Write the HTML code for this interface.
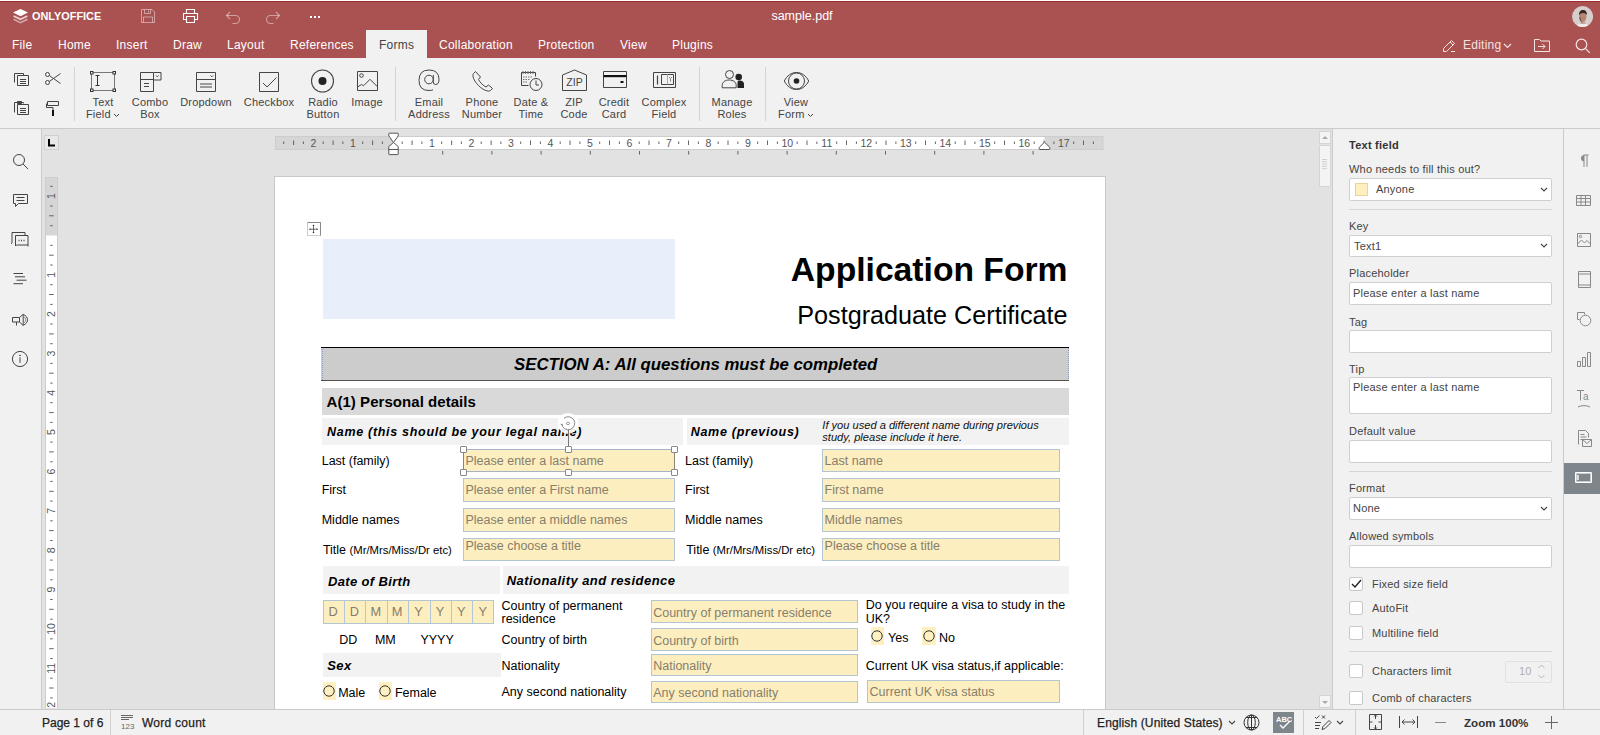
<!DOCTYPE html>
<html><head><meta charset="utf-8">
<style>
*{box-sizing:border-box;margin:0;padding:0}
html,body{width:1600px;height:735px;overflow:hidden;font-family:"Liberation Sans",sans-serif;background:#e2e2e2;color:#444}
.a{position:absolute}
#hdr{left:0;top:0;width:1600px;height:58px;background:#aa5252;border-top:2px solid #a02828}
.tab{position:absolute;top:36px;font-size:12px;color:#fff;line-height:14px;letter-spacing:.25px}
#tb{left:0;top:58px;width:1600px;height:71px;background:#f1f1f1;border-bottom:1px solid #cbcbcb}
.tl{position:absolute;top:37.6px;font-size:11px;color:#444;line-height:12px;letter-spacing:.2px;text-align:center;white-space:nowrap}
.sep{position:absolute;top:9px;width:1px;height:54px;background:#d4d4d4}
#lp{left:0;top:129px;width:42px;height:580px;background:#f1f1f1;border-right:1px solid #cbcbcb}
#rp{left:1332px;top:129px;width:232px;height:580px;background:#f1f1f1;border-left:1px solid #cbcbcb}
#ri{left:1563px;top:129px;width:37px;height:580px;background:#f1f1f1;border-left:1px solid #cbcbcb}
#sb{left:0;top:709px;width:1600px;height:26px;background:#f1f1f1;border-top:1px solid #cbcbcb}
#page{left:274px;top:176px;width:831.5px;height:560px;background:#fff;border:1px solid #c6c8cc}
.d{position:absolute;font-family:"Liberation Sans",sans-serif;color:#000;white-space:nowrap}
.rl{position:absolute;left:1349px;font-size:11px;line-height:13px;color:#444;white-space:nowrap;letter-spacing:.2px}
.inp{position:absolute;left:1349px;width:203px;background:#fff;border:1px solid #cfcfcf;border-radius:2px}
.chev{position:absolute;left:1540px}
.hsep{position:absolute;left:1349px;width:203px;height:1px;background:#d5d5d5}
.cb{position:absolute;left:1349px;width:14px;height:14px;background:#fff;border:1px solid #c8c8c8;border-radius:2px}
.st{position:absolute;top:716px;font-size:12px;line-height:14px;color:#222;white-space:nowrap;-webkit-text-stroke:.25px #222}
</style></head><body>
<div id="hdr" class="a">
 <!-- logo -->
 <svg class="a" style="left:12px;top:6.0px" width="17" height="17" viewBox="0 0 17 17">
  <path d="M8.5 1 L16 4.6 L8.5 8.2 L1 4.6Z" fill="#fff"/>
  <path d="M1.6 8 L8.5 11.3 L15.4 8" fill="none" stroke="#fff" stroke-opacity=".75" stroke-width="1.6"/>
  <path d="M1.6 11.3 L8.5 14.6 L15.4 11.3" fill="none" stroke="#fff" stroke-opacity=".5" stroke-width="1.6"/>
 </svg>
 <div class="a" style="left:32px;top:8.0px;font-size:10.9px;font-weight:bold;color:#fff">ONLYOFFICE</div>
 <!-- save -->
 <svg class="a" style="left:140px;top:6.0px" width="16" height="16" viewBox="0 0 16 16" fill="none" stroke="#fff" stroke-opacity=".45" stroke-width="1">
  <path d="M1.5 1.5h10.5l2.5 2.5v10.5h-13z"/><path d="M4.5 1.5v4h6v-4"/><path d="M3.5 14.5v-5.5h9v5.5"/><path d="M8.5 2.5v2"/>
 </svg>
 <!-- print -->
 <svg class="a" style="left:182px;top:6.0px" width="17" height="16" viewBox="0 0 17 16" fill="none" stroke="#fff" stroke-width="1.1">
  <path d="M4.5 5.5v-4h8v4"/><path d="M4.5 11.5h-3v-6h14v6h-3"/><path d="M4.5 8.5h8v6h-8z"/>
 </svg>
 <!-- undo -->
 <svg class="a" style="left:225px;top:8.0px" width="16" height="15" viewBox="0 0 16 15" fill="none" stroke="#fff" stroke-opacity=".45" stroke-width="1.1">
  <path d="M1.5 5.5h9a4 4 0 0 1 0 8h-3"/><path d="M5 2l-3.5 3.5L5 9"/>
 </svg>
 <!-- redo -->
 <svg class="a" style="left:265px;top:8.0px" width="16" height="15" viewBox="0 0 16 15" fill="none" stroke="#fff" stroke-opacity=".45" stroke-width="1.1">
  <path d="M14.5 5.5h-9a4 4 0 0 0 0 8h3"/><path d="M11 2l3.5 3.5L11 9"/>
 </svg>
 <svg class="a" style="left:309px;top:13.0px" width="12" height="4" viewBox="0 0 12 4" fill="#fff">
  <rect x="1" y="1" width="2" height="2"/><rect x="5" y="1" width="2" height="2"/><rect x="9" y="1" width="2" height="2"/>
 </svg>
 <div class="a" style="left:0;width:1604px;top:7.0px;text-align:center;font-size:12.5px;color:#fff">sample.pdf</div>
 <!-- avatar -->
 <svg class="a" style="left:1572px;top:3.8px" width="21.2" height="21.2" viewBox="0 0 21.2 21.2">
  <defs><clipPath id="av"><circle cx="10.6" cy="10.6" r="10.5"/></clipPath></defs>
  <circle cx="10.6" cy="10.6" r="10.5" fill="#d6cdcd"/>
  <g clip-path="url(#av)">
   <path d="M4 22c1-4 3-5 6.5-5s5.5 1 6.5 5z" fill="#efe9e8"/>
   <path d="M8 18l1.5-3h3l1.5 3z" fill="#c9a597"/>
   <ellipse cx="10.8" cy="10.8" rx="3.6" ry="5" fill="#b58574"/>
   <path d="M7 9.5c-.3-3.5 1.5-5.5 4-5.5s4.3 1.5 3.8 5.5c-.5-1.8-1.5-2.6-3.8-2.6S7.5 7.7 7 9.5z" fill="#3b2520"/>
   <path d="M7.5 11c0 3 1.2 5.5 3.3 5.5-1.5-.8-2.2-2.5-2.3-5z" fill="#5a3a30"/>
  </g>
 </svg>
 <!-- tabs -->
 <div class="tab" style="left:12px">File</div>
 <div class="tab" style="left:58px">Home</div>
 <div class="tab" style="left:116px">Insert</div>
 <div class="tab" style="left:173px">Draw</div>
 <div class="tab" style="left:227px">Layout</div>
 <div class="tab" style="left:290px">References</div>
 <div class="a" style="left:366px;top:28.0px;width:61px;height:29px;background:#f1f1f1"></div>
 <div class="tab" style="left:379px;color:#444">Forms</div>
 <div class="tab" style="left:439px">Collaboration</div>
 <div class="tab" style="left:538px">Protection</div>
 <div class="tab" style="left:620px">View</div>
 <div class="tab" style="left:672px">Plugins</div>
 <!-- right -->
 <svg class="a" style="left:1442px;top:36.0px" width="15" height="15" viewBox="0 0 15 15" fill="none" stroke="#f5e3e3" stroke-width="1">
  <path d="M1.5 13.5v-3l8-8 3 3-8 8z"/><path d="M8 4l3 3"/><path d="M9 13.5h4"/>
 </svg>
 <div class="tab" style="left:1463px;color:#f5e3e3">Editing</div>
 <svg class="a" style="left:1503px;top:41.0px" width="9" height="6" viewBox="0 0 9 6" fill="none" stroke="#f5e3e3" stroke-width="1.2"><path d="M1 1l3.5 3.5L8 1"/></svg>
 <svg class="a" style="left:1533px;top:36.0px" width="18" height="15" viewBox="0 0 18 15" fill="none" stroke="#f5e3e3" stroke-width="1">
  <path d="M1.5 13.5v-12h5l1.5 1.5h8.5v10.5z"/><path d="M5 8.5h7"/><path d="M9.5 6l2.5 2.5-2.5 2.5"/>
 </svg>
 <svg class="a" style="left:1575px;top:36.0px" width="16" height="16" viewBox="0 0 16 16" fill="none" stroke="#f5e3e3" stroke-width="1.2">
  <circle cx="6.5" cy="6.5" r="5.3"/><path d="M10.3 10.3l4.5 4.5"/>
 </svg>
</div>
<div class="a" style="left:0;top:0;width:1600px;height:1px;background:#fff"></div>

<div id="tb" class="a">
 <!-- copy -->
 <svg class="a" style="left:13px;top:14px" width="17" height="15" viewBox="0 0 17 15" fill="none" stroke="#444" stroke-width="1">
  <path d="M1.5 10.5v-9h9v2"/><path d="M4.5 13.5v-10h11v10z"/><path d="M7 7.5h6M7 9.5h6M7 11.5h6"/>
 </svg>
 <!-- cut -->
 <svg class="a" style="left:44px;top:13px" width="18" height="15" viewBox="0 0 18 15" fill="none" stroke="#444" stroke-width="1">
  <circle cx="3.5" cy="3.5" r="2"/><circle cx="3.5" cy="11.5" r="2"/><path d="M5.3 4.5L16.5 12.5M5.3 10.5L16.5 2.5"/>
 </svg>
 <!-- paste -->
 <svg class="a" style="left:13px;top:42px" width="17" height="15" viewBox="0 0 17 15" fill="none" stroke="#444" stroke-width="1">
  <path d="M1.5 12.5v-10h3M9 2.5h1.5v1"/><path d="M4.5 1.5h4v2h-4z" fill="#444"/><path d="M4.5 14.5v-10h11v10z"/><path d="M7 8.5h6M7 10.5h6M7 12.5h6"/>
 </svg>
 <!-- format painter -->
 <svg class="a" style="left:45px;top:42px" width="15" height="16" viewBox="0 0 15 16" fill="none" stroke="#444" stroke-width="1">
  <path d="M2.5 1.5h11v4h-11z"/><path d="M1.5 3.5v4h6.5v3"/><rect x="7" y="10" width="2" height="6" fill="#111" stroke="none"/>
 </svg>
 <div class="sep" style="left:74px"></div>
 <!-- text field -->
 <svg class="a" style="left:89px;top:12px" width="28" height="23" viewBox="0 0 28 23" fill="none" stroke="#555" stroke-width="1">
  <path d="M3 2.5h22M3 20.5h22M2.5 3v17M25.5 3v17" stroke="#777"/>
  <rect x="1.5" y="1.5" width="2.5" height="2.5" fill="#f1f1f1" stroke="#333"/><rect x="24" y="1.5" width="2.5" height="2.5" fill="#f1f1f1" stroke="#333"/><rect x="1.5" y="19" width="2.5" height="2.5" fill="#f1f1f1" stroke="#333"/><rect x="24" y="19" width="2.5" height="2.5" fill="#f1f1f1" stroke="#333"/>
  <path d="M8.5 5.5v10M6.5 5.5h4M6.5 15.5h4" stroke="#333"/>
 </svg>
 <div class="tl" style="left:83px;width:40px">Text<br>Field&thinsp;<svg width="7" height="5" viewBox="0 0 7 5" fill="none" stroke="#444"><path d="M1 1l2.5 2.5L6 1"/></svg></div>
 <!-- combo box -->
 <svg class="a" style="left:139px;top:13px" width="24" height="22" viewBox="0 0 24 22" fill="none" stroke="#444" stroke-width="1">
  <path d="M1.5 1.5h13v19h-13z"/><path d="M14.5 1.5h7.5v7.5h-7.5"/><path d="M1.5 8.5h13"/><path d="M5 12.5h5M5 15.5h5"/><path d="M17 4.5l1.3 1.3 1.3-1.3"/>
 </svg>
 <div class="tl" style="left:125px;width:50px">Combo<br>Box</div>
 <!-- dropdown -->
 <svg class="a" style="left:195px;top:13px" width="22" height="22" viewBox="0 0 22 22" fill="none" stroke="#444" stroke-width="1">
  <path d="M1.5 1.5h19v19h-19z"/><path d="M1.5 8.5h19"/><path d="M15.5 4.5l1.3 1.3 1.3-1.3"/><path d="M5 13h12M5 16h12"/>
 </svg>
 <div class="tl" style="left:176px;width:60px">Dropdown</div>
 <!-- checkbox -->
 <svg class="a" style="left:258px;top:13px" width="22" height="22" viewBox="0 0 22 22" fill="none" stroke="#444" stroke-width="1">
  <path d="M1.5 1.5h19v19h-19z"/><path d="M5 12l4 4 9.5-9.5"/>
 </svg>
 <div class="tl" style="left:239px;width:60px">Checkbox</div>
 <!-- radio -->
 <svg class="a" style="left:310px;top:11px" width="25" height="24" viewBox="0 0 25 24" fill="none" stroke="#444" stroke-width="1.1">
  <circle cx="12.5" cy="12" r="11"/><circle cx="12.5" cy="12" r="4" fill="#222" stroke="none"/>
 </svg>
 <div class="tl" style="left:298px;width:50px">Radio<br>Button</div>
 <!-- image -->
 <svg class="a" style="left:356px;top:12px" width="23" height="22" viewBox="0 0 23 22" fill="none" stroke="#444" stroke-width="1">
  <path d="M1.5 1.5h20v19h-20z"/><circle cx="5.5" cy="5.5" r="1.8"/><path d="M1.5 17l4-2.5 2 1.3 6.5-6.5 7.5 7.5"/>
 </svg>
 <div class="tl" style="left:342px;width:50px">Image</div>
 <div class="sep" style="left:395px"></div>
 <!-- email -->
 <svg class="a" style="left:418px;top:11px" width="23" height="23" viewBox="0 0 23 23" fill="none" stroke="#444" stroke-width="1">
  <circle cx="11" cy="10.5" r="4.3"/><path d="M15.3 6v7q0 2.5 2.3 2.5 3.4 0 3.4-5 0-9.5-10-9.5-10 0-10 10.5 0 10 10 10 2.5 0 4-.7"/>
 </svg>
 <div class="tl" style="left:404px;width:50px">Email<br>Address</div>
 <!-- phone -->
 <svg class="a" style="left:471px;top:12px" width="23" height="22" viewBox="0 0 23 22" fill="none" stroke="#444" stroke-width="1">
  <path d="M4.5 1.5l-2 2c-1.5 2 0 7 5 12s10 6.5 12 5l2-2-4-3.5-2.5 2c-3-1.5-6-4.5-7.5-7.5l2-2.5z"/>
 </svg>
 <div class="tl" style="left:457px;width:50px">Phone<br>Number</div>
 <!-- date time -->
 <svg class="a" style="left:520px;top:12px" width="24" height="23" viewBox="0 0 24 23" fill="none" stroke="#444" stroke-width="1">
  <path d="M1.5 2.5h14v4M1.5 2.5v13h7"/><path d="M3 1v3M5.5 1v3M8 1v3M10.5 1v3M13 1v3" stroke="#666"/><path d="M3 7h1.5M5.5 7h1.5M8 7h1.5M10.5 7h1.5M3 9.5h1.5M5.5 9.5h1.5M8 9.5h1.5M3 12h1.5M5.5 12h1.5" stroke="#777"/>
  <circle cx="16" cy="14.5" r="6" /><path d="M16 10.5v4.5h3"/>
 </svg>
 <div class="tl" style="left:506px;width:50px">Date &amp;<br>Time</div>
 <!-- zip -->
 <svg class="a" style="left:561px;top:11px" width="27" height="24" viewBox="0 0 27 24" fill="none" stroke="#444" stroke-width="1">
  <path d="M1.5 6l12-5 12 5v15.5h-24z"/>
  <text x="13.5" y="16.5" text-anchor="middle" font-family="Liberation Sans" font-size="10.5" fill="#444" stroke="none">ZIP</text>
 </svg>
 <div class="tl" style="left:549px;width:50px">ZIP<br>Code</div>
 <!-- credit card -->
 <svg class="a" style="left:602px;top:13px" width="26" height="19" viewBox="0 0 26 19" fill="none" stroke="#444" stroke-width="1">
  <path d="M1.5 0.5h23v16h-23z"/><rect x="1.5" y="4" width="23" height="2.2" fill="#111" stroke="none"/><rect x="18.5" y="10" width="3" height="2" fill="#111" stroke="none"/>
 </svg>
 <div class="tl" style="left:589px;width:50px">Credit<br>Card</div>
 <!-- complex field -->
 <svg class="a" style="left:652px;top:13px" width="25" height="18" viewBox="0 0 25 18" fill="none" stroke="#444" stroke-width="1">
  <path d="M1.5 1.5h22v15h-22z"/><path d="M5.5 4.5v9" stroke-width="1.2"/><path d="M9.5 3.5h12v10h-12z"/><path d="M15.5 3.5v10" stroke="#aaa"/><path d="M17 6l1.5 1.5 1.5-1.5M18.5 7.5v3" stroke="#888"/>
 </svg>
 <div class="tl" style="left:639px;width:50px">Complex<br>Field</div>
 <div class="sep" style="left:699px"></div>
 <!-- manage roles -->
 <svg class="a" style="left:721px;top:12px" width="25" height="20" viewBox="0 0 25 20" fill="none" stroke="#444" stroke-width="1">
  <circle cx="8.5" cy="4.5" r="4"/><path d="M1.2 17.8v-2.3c0-3.5 3-5.5 7-5.5s7 2 7 5.5v2.3z"/>
  <circle cx="17.7" cy="7" r="3.3" fill="#222" stroke="none"/><path d="M16.5 18v-5.5c0-1.5 1-2 2-2 2 0 4.5 1 4.5 3.5v4z" fill="#222" stroke="none"/>
 </svg>
 <div class="tl" style="left:707px;width:50px">Manage<br>Roles</div>
 <div class="sep" style="left:765px"></div>
 <!-- view form -->
 <svg class="a" style="left:783px;top:13px" width="27" height="20" viewBox="0 0 27 20" fill="none" stroke="#444" stroke-width="1">
  <path d="M1.3 10C4 4.5 8.5 1.5 13.5 1.5S23 4.5 25.7 10C23 15.5 18.5 18.5 13.5 18.5S4 15.5 1.3 10z"/>
  <circle cx="13.5" cy="10" r="8"/><circle cx="13.5" cy="10" r="2.8" fill="#222" stroke="none"/>
 </svg>
 <div class="tl" style="left:771px;width:50px">View<br>Form&thinsp;<svg width="7" height="5" viewBox="0 0 7 5" fill="none" stroke="#444"><path d="M1 1l2.5 2.5L6 1"/></svg></div>
</div>

<div id="lp" class="a">
 <svg class="a" style="left:12px;top:24px" width="17" height="17" viewBox="0 0 17 17" fill="none" stroke="#444" stroke-width="1">
  <circle cx="7" cy="7" r="5.5"/><path d="M11 11l5 5"/>
 </svg>
 <svg class="a" style="left:12px;top:64px" width="17" height="15" viewBox="0 0 17 15" fill="none" stroke="#444" stroke-width="1">
  <path d="M1.5 1.5h14v9h-9l-3 3v-3h-2z"/><path d="M4.5 4.5h8M4.5 7.5h8"/>
 </svg>
 <svg class="a" style="left:10px;top:102px" width="20" height="18" viewBox="0 0 20 18" fill="none" stroke="#444" stroke-width="1">
  <path d="M2 12v-10.5h13v3"/><path d="M2 12l-.8 .8"/><path d="M5.5 4.5h12.5v9.5h-11.5l-1 1z"/><path d="M18 14v1.5" /><path d="M8.5 9.5h1M11 9.5h1M13.5 9.5h1" stroke-width="1.3"/>
 </svg>
 <svg class="a" style="left:12px;top:143px" width="16" height="14" viewBox="0 0 16 14" fill="none" stroke="#444" stroke-width="1">
  <path d="M1.5 1.5h9.5M3 4.8h10M4.5 8.2h10" /><path d="M1.5 11.7h9.5"/>
 </svg>
 <svg class="a" style="left:11px;top:182px" width="19" height="17" viewBox="0 0 19 17" fill="none" stroke="#444" stroke-width="1">
  <path d="M1.5 6.5h7v4.5h-7z"/><path d="M8.5 6.5l3.7-3.3v11.3l-3.7-3.5"/><path d="M5.5 11v3.5"/><path d="M12.5 3.5c2.5 1 4 3 4 5.3s-1.5 4.3-4 5.3" /><path d="M12.8 5.5c1.2.8 1.8 2 1.8 3.3s-.6 2.5-1.8 3.3" stroke="#888"/>
 </svg>
 <svg class="a" style="left:11px;top:221px" width="18" height="18" viewBox="0 0 18 18" fill="none" stroke="#444" stroke-width="1">
  <circle cx="9" cy="9" r="7.6"/><path d="M9 7.3v5.5"/><circle cx="9" cy="5.5" r=".4" fill="#444"/>
 </svg>
</div>
<!-- corner box -->
<div class="a" style="left:44px;top:135px;width:15px;height:15px;background:#e8e8e8;border:1px solid #d0d0d0"></div>
<svg class="a" style="left:48px;top:139px" width="8" height="8" viewBox="0 0 8 8"><path d="M1 0v6.5h6" fill="none" stroke="#000" stroke-width="2"/></svg>
<!-- scrollbar -->
<div class="a" style="left:1318.5px;top:130.5px;width:12px;height:13px;border:1px solid #d4d4d4;background:#f4f4f4"></div>
<svg class="a" style="left:1320.5px;top:134.5px" width="8" height="5" viewBox="0 0 8 5"><path d="M1 4l3-3 3 3z" fill="#aaa"/></svg>
<div class="a" style="left:1318.5px;top:145px;width:12px;height:42px;border:1px solid #d4d4d4;background:#f4f4f4;border-radius:1px"></div>
<svg class="a" style="left:1321.5px;top:158px" width="6" height="12" viewBox="0 0 6 12"><path d="M0 1.5h5M0 3.8h5M0 6.1h5M0 8.4h5M0 10.7h5" stroke="#cfcfcf"/></svg>
<div class="a" style="left:1318.5px;top:695px;width:12px;height:13px;border:1px solid #d4d4d4;background:#f4f4f4"></div>
<svg class="a" style="left:1320.5px;top:699.5px" width="8" height="5" viewBox="0 0 8 5"><path d="M1 1l3 3 3-3z" fill="#aaa"/></svg>

<svg class="a" style="left:275px;top:130px" width="829" height="26" viewBox="0 0 829 26">
<rect x="0.5" y="6.5" width="827.5" height="13" fill="#d6d6d6" stroke="#cdcdcd"/>
<rect x="118.5" y="7" width="651.0" height="12" fill="#fff"/>
<line x1="8.7" y1="11.5" x2="8.7" y2="14" stroke="#555" stroke-width="0.9"/>
<line x1="18.6" y1="10.5" x2="18.6" y2="15" stroke="#555" stroke-width="0.9"/>
<line x1="28.4" y1="11.5" x2="28.4" y2="14" stroke="#555" stroke-width="0.9"/>
<text x="38.3" y="16.6" text-anchor="middle" font-family="Liberation Sans" font-size="10.5" fill="#555">2</text>
<line x1="48.2" y1="11.5" x2="48.2" y2="14" stroke="#555" stroke-width="0.9"/>
<line x1="58.1" y1="10.5" x2="58.1" y2="15" stroke="#555" stroke-width="0.9"/>
<line x1="67.9" y1="11.5" x2="67.9" y2="14" stroke="#555" stroke-width="0.9"/>
<text x="77.8" y="16.6" text-anchor="middle" font-family="Liberation Sans" font-size="10.5" fill="#555">1</text>
<line x1="87.7" y1="11.5" x2="87.7" y2="14" stroke="#555" stroke-width="0.9"/>
<line x1="97.6" y1="10.5" x2="97.6" y2="15" stroke="#555" stroke-width="0.9"/>
<line x1="107.4" y1="11.5" x2="107.4" y2="14" stroke="#555" stroke-width="0.9"/>
<line x1="127.2" y1="11.5" x2="127.2" y2="14" stroke="#555" stroke-width="0.9"/>
<line x1="137.1" y1="10.5" x2="137.1" y2="15" stroke="#555" stroke-width="0.9"/>
<line x1="146.9" y1="11.5" x2="146.9" y2="14" stroke="#555" stroke-width="0.9"/>
<text x="156.8" y="16.6" text-anchor="middle" font-family="Liberation Sans" font-size="10.5" fill="#555">1</text>
<line x1="166.7" y1="11.5" x2="166.7" y2="14" stroke="#555" stroke-width="0.9"/>
<line x1="176.6" y1="10.5" x2="176.6" y2="15" stroke="#555" stroke-width="0.9"/>
<line x1="186.4" y1="11.5" x2="186.4" y2="14" stroke="#555" stroke-width="0.9"/>
<text x="196.3" y="16.6" text-anchor="middle" font-family="Liberation Sans" font-size="10.5" fill="#555">2</text>
<line x1="206.2" y1="11.5" x2="206.2" y2="14" stroke="#555" stroke-width="0.9"/>
<line x1="216.1" y1="10.5" x2="216.1" y2="15" stroke="#555" stroke-width="0.9"/>
<line x1="225.9" y1="11.5" x2="225.9" y2="14" stroke="#555" stroke-width="0.9"/>
<text x="235.8" y="16.6" text-anchor="middle" font-family="Liberation Sans" font-size="10.5" fill="#555">3</text>
<line x1="245.7" y1="11.5" x2="245.7" y2="14" stroke="#555" stroke-width="0.9"/>
<line x1="255.5" y1="10.5" x2="255.5" y2="15" stroke="#555" stroke-width="0.9"/>
<line x1="265.4" y1="11.5" x2="265.4" y2="14" stroke="#555" stroke-width="0.9"/>
<text x="275.3" y="16.6" text-anchor="middle" font-family="Liberation Sans" font-size="10.5" fill="#555">4</text>
<line x1="285.2" y1="11.5" x2="285.2" y2="14" stroke="#555" stroke-width="0.9"/>
<line x1="295.0" y1="10.5" x2="295.0" y2="15" stroke="#555" stroke-width="0.9"/>
<line x1="304.9" y1="11.5" x2="304.9" y2="14" stroke="#555" stroke-width="0.9"/>
<text x="314.8" y="16.6" text-anchor="middle" font-family="Liberation Sans" font-size="10.5" fill="#555">5</text>
<line x1="324.7" y1="11.5" x2="324.7" y2="14" stroke="#555" stroke-width="0.9"/>
<line x1="334.5" y1="10.5" x2="334.5" y2="15" stroke="#555" stroke-width="0.9"/>
<line x1="344.4" y1="11.5" x2="344.4" y2="14" stroke="#555" stroke-width="0.9"/>
<text x="354.3" y="16.6" text-anchor="middle" font-family="Liberation Sans" font-size="10.5" fill="#555">6</text>
<line x1="364.2" y1="11.5" x2="364.2" y2="14" stroke="#555" stroke-width="0.9"/>
<line x1="374.0" y1="10.5" x2="374.0" y2="15" stroke="#555" stroke-width="0.9"/>
<line x1="383.9" y1="11.5" x2="383.9" y2="14" stroke="#555" stroke-width="0.9"/>
<text x="393.8" y="16.6" text-anchor="middle" font-family="Liberation Sans" font-size="10.5" fill="#555">7</text>
<line x1="403.7" y1="11.5" x2="403.7" y2="14" stroke="#555" stroke-width="0.9"/>
<line x1="413.5" y1="10.5" x2="413.5" y2="15" stroke="#555" stroke-width="0.9"/>
<line x1="423.4" y1="11.5" x2="423.4" y2="14" stroke="#555" stroke-width="0.9"/>
<text x="433.3" y="16.6" text-anchor="middle" font-family="Liberation Sans" font-size="10.5" fill="#555">8</text>
<line x1="443.2" y1="11.5" x2="443.2" y2="14" stroke="#555" stroke-width="0.9"/>
<line x1="453.0" y1="10.5" x2="453.0" y2="15" stroke="#555" stroke-width="0.9"/>
<line x1="462.9" y1="11.5" x2="462.9" y2="14" stroke="#555" stroke-width="0.9"/>
<text x="472.8" y="16.6" text-anchor="middle" font-family="Liberation Sans" font-size="10.5" fill="#555">9</text>
<line x1="482.7" y1="11.5" x2="482.7" y2="14" stroke="#555" stroke-width="0.9"/>
<line x1="492.5" y1="10.5" x2="492.5" y2="15" stroke="#555" stroke-width="0.9"/>
<line x1="502.4" y1="11.5" x2="502.4" y2="14" stroke="#555" stroke-width="0.9"/>
<text x="512.3" y="16.6" text-anchor="middle" font-family="Liberation Sans" font-size="10.5" fill="#555">10</text>
<line x1="522.2" y1="11.5" x2="522.2" y2="14" stroke="#555" stroke-width="0.9"/>
<line x1="532.0" y1="10.5" x2="532.0" y2="15" stroke="#555" stroke-width="0.9"/>
<line x1="541.9" y1="11.5" x2="541.9" y2="14" stroke="#555" stroke-width="0.9"/>
<text x="551.8" y="16.6" text-anchor="middle" font-family="Liberation Sans" font-size="10.5" fill="#555">11</text>
<line x1="561.7" y1="11.5" x2="561.7" y2="14" stroke="#555" stroke-width="0.9"/>
<line x1="571.5" y1="10.5" x2="571.5" y2="15" stroke="#555" stroke-width="0.9"/>
<line x1="581.4" y1="11.5" x2="581.4" y2="14" stroke="#555" stroke-width="0.9"/>
<text x="591.3" y="16.6" text-anchor="middle" font-family="Liberation Sans" font-size="10.5" fill="#555">12</text>
<line x1="601.2" y1="11.5" x2="601.2" y2="14" stroke="#555" stroke-width="0.9"/>
<line x1="611.0" y1="10.5" x2="611.0" y2="15" stroke="#555" stroke-width="0.9"/>
<line x1="620.9" y1="11.5" x2="620.9" y2="14" stroke="#555" stroke-width="0.9"/>
<text x="630.8" y="16.6" text-anchor="middle" font-family="Liberation Sans" font-size="10.5" fill="#555">13</text>
<line x1="640.7" y1="11.5" x2="640.7" y2="14" stroke="#555" stroke-width="0.9"/>
<line x1="650.5" y1="10.5" x2="650.5" y2="15" stroke="#555" stroke-width="0.9"/>
<line x1="660.4" y1="11.5" x2="660.4" y2="14" stroke="#555" stroke-width="0.9"/>
<text x="670.3" y="16.6" text-anchor="middle" font-family="Liberation Sans" font-size="10.5" fill="#555">14</text>
<line x1="680.2" y1="11.5" x2="680.2" y2="14" stroke="#555" stroke-width="0.9"/>
<line x1="690.0" y1="10.5" x2="690.0" y2="15" stroke="#555" stroke-width="0.9"/>
<line x1="699.9" y1="11.5" x2="699.9" y2="14" stroke="#555" stroke-width="0.9"/>
<text x="709.8" y="16.6" text-anchor="middle" font-family="Liberation Sans" font-size="10.5" fill="#555">15</text>
<line x1="719.7" y1="11.5" x2="719.7" y2="14" stroke="#555" stroke-width="0.9"/>
<line x1="729.5" y1="10.5" x2="729.5" y2="15" stroke="#555" stroke-width="0.9"/>
<line x1="739.4" y1="11.5" x2="739.4" y2="14" stroke="#555" stroke-width="0.9"/>
<text x="749.3" y="16.6" text-anchor="middle" font-family="Liberation Sans" font-size="10.5" fill="#555">16</text>
<line x1="759.2" y1="11.5" x2="759.2" y2="14" stroke="#555" stroke-width="0.9"/>
<line x1="769.0" y1="10.5" x2="769.0" y2="15" stroke="#555" stroke-width="0.9"/>
<line x1="778.9" y1="11.5" x2="778.9" y2="14" stroke="#555" stroke-width="0.9"/>
<text x="788.8" y="16.6" text-anchor="middle" font-family="Liberation Sans" font-size="10.5" fill="#555">17</text>
<line x1="798.7" y1="11.5" x2="798.7" y2="14" stroke="#555" stroke-width="0.9"/>
<line x1="808.5" y1="10.5" x2="808.5" y2="15" stroke="#555" stroke-width="0.9"/>
<line x1="818.4" y1="11.5" x2="818.4" y2="14" stroke="#555" stroke-width="0.9"/>
<line x1="167.7" y1="21" x2="167.7" y2="24.5" stroke="#555" stroke-width="0.9"/>
<line x1="216.9" y1="21" x2="216.9" y2="24.5" stroke="#555" stroke-width="0.9"/>
<line x1="266.1" y1="21" x2="266.1" y2="24.5" stroke="#555" stroke-width="0.9"/>
<line x1="315.3" y1="21" x2="315.3" y2="24.5" stroke="#555" stroke-width="0.9"/>
<line x1="364.5" y1="21" x2="364.5" y2="24.5" stroke="#555" stroke-width="0.9"/>
<line x1="413.7" y1="21" x2="413.7" y2="24.5" stroke="#555" stroke-width="0.9"/>
<line x1="462.9" y1="21" x2="462.9" y2="24.5" stroke="#555" stroke-width="0.9"/>
<line x1="512.1" y1="21" x2="512.1" y2="24.5" stroke="#555" stroke-width="0.9"/>
<line x1="561.3" y1="21" x2="561.3" y2="24.5" stroke="#555" stroke-width="0.9"/>
<line x1="610.5" y1="21" x2="610.5" y2="24.5" stroke="#555" stroke-width="0.9"/>
<line x1="659.7" y1="21" x2="659.7" y2="24.5" stroke="#555" stroke-width="0.9"/>
<line x1="708.9" y1="21" x2="708.9" y2="24.5" stroke="#555" stroke-width="0.9"/>
<line x1="758.1" y1="21" x2="758.1" y2="24.5" stroke="#555" stroke-width="0.9"/>
<path d="M113.8 3.7q0-.5.5-.5h8.4q.5 0 .5.5v2.2l-4.7 6.6-4.7-6.6z" fill="#fff" stroke="#555" stroke-width="1"/>
<path d="M118.5 12.5l4.7 4v7.6q0 .5-.5.5h-8.4q-.5 0-.5-.5v-7.6z" fill="#fff" stroke="#555" stroke-width="1"/>
<line x1="113.8" y1="19.5" x2="123.2" y2="19.5" stroke="#555" stroke-width="1"/>
<path d="M769.5 12.2l4.8 4.6q.5 .5 .5 1.2v.9q0 .6-.6.6h-9.4q-.6 0-.6-.6v-.9q0-.7.5-1.2z" fill="#fff" stroke="#555" stroke-width="1"/>
</svg>
<svg class="a" style="left:45px;top:177px" width="14" height="531" viewBox="0 0 14 531">
<rect x="0.5" y="0.5" width="12" height="531" fill="#fff" stroke="#cdcdcd"/>
<rect x="1" y="1" width="11" height="57.5" fill="#d6d6d6"/>
<line x1="5.2" y1="9.3" x2="7.7" y2="9.3" stroke="#555" stroke-width="0.9"/>
<text x="0" y="0" transform="translate(10.3,19.2) rotate(-90)" text-anchor="middle" font-family="Liberation Sans" font-size="10.5" fill="#555">1</text>
<line x1="5.2" y1="29.0" x2="7.7" y2="29.0" stroke="#555" stroke-width="0.9"/>
<line x1="4.2" y1="38.8" x2="8.7" y2="38.8" stroke="#555" stroke-width="0.9"/>
<line x1="5.2" y1="48.7" x2="7.7" y2="48.7" stroke="#555" stroke-width="0.9"/>
<line x1="5.2" y1="68.3" x2="7.7" y2="68.3" stroke="#555" stroke-width="0.9"/>
<line x1="4.2" y1="78.2" x2="8.7" y2="78.2" stroke="#555" stroke-width="0.9"/>
<line x1="5.2" y1="88.0" x2="7.7" y2="88.0" stroke="#555" stroke-width="0.9"/>
<text x="0" y="0" transform="translate(10.3,97.9) rotate(-90)" text-anchor="middle" font-family="Liberation Sans" font-size="10.5" fill="#555">1</text>
<line x1="5.2" y1="107.7" x2="7.7" y2="107.7" stroke="#555" stroke-width="0.9"/>
<line x1="4.2" y1="117.5" x2="8.7" y2="117.5" stroke="#555" stroke-width="0.9"/>
<line x1="5.2" y1="127.4" x2="7.7" y2="127.4" stroke="#555" stroke-width="0.9"/>
<text x="0" y="0" transform="translate(10.3,137.2) rotate(-90)" text-anchor="middle" font-family="Liberation Sans" font-size="10.5" fill="#555">2</text>
<line x1="5.2" y1="147.0" x2="7.7" y2="147.0" stroke="#555" stroke-width="0.9"/>
<line x1="4.2" y1="156.9" x2="8.7" y2="156.9" stroke="#555" stroke-width="0.9"/>
<line x1="5.2" y1="166.7" x2="7.7" y2="166.7" stroke="#555" stroke-width="0.9"/>
<text x="0" y="0" transform="translate(10.3,176.6) rotate(-90)" text-anchor="middle" font-family="Liberation Sans" font-size="10.5" fill="#555">3</text>
<line x1="5.2" y1="186.4" x2="7.7" y2="186.4" stroke="#555" stroke-width="0.9"/>
<line x1="4.2" y1="196.2" x2="8.7" y2="196.2" stroke="#555" stroke-width="0.9"/>
<line x1="5.2" y1="206.1" x2="7.7" y2="206.1" stroke="#555" stroke-width="0.9"/>
<text x="0" y="0" transform="translate(10.3,215.9) rotate(-90)" text-anchor="middle" font-family="Liberation Sans" font-size="10.5" fill="#555">4</text>
<line x1="5.2" y1="225.7" x2="7.7" y2="225.7" stroke="#555" stroke-width="0.9"/>
<line x1="4.2" y1="235.6" x2="8.7" y2="235.6" stroke="#555" stroke-width="0.9"/>
<line x1="5.2" y1="245.4" x2="7.7" y2="245.4" stroke="#555" stroke-width="0.9"/>
<text x="0" y="0" transform="translate(10.3,255.2) rotate(-90)" text-anchor="middle" font-family="Liberation Sans" font-size="10.5" fill="#555">5</text>
<line x1="5.2" y1="265.1" x2="7.7" y2="265.1" stroke="#555" stroke-width="0.9"/>
<line x1="4.2" y1="274.9" x2="8.7" y2="274.9" stroke="#555" stroke-width="0.9"/>
<line x1="5.2" y1="284.8" x2="7.7" y2="284.8" stroke="#555" stroke-width="0.9"/>
<text x="0" y="0" transform="translate(10.3,294.6) rotate(-90)" text-anchor="middle" font-family="Liberation Sans" font-size="10.5" fill="#555">6</text>
<line x1="5.2" y1="304.4" x2="7.7" y2="304.4" stroke="#555" stroke-width="0.9"/>
<line x1="4.2" y1="314.3" x2="8.7" y2="314.3" stroke="#555" stroke-width="0.9"/>
<line x1="5.2" y1="324.1" x2="7.7" y2="324.1" stroke="#555" stroke-width="0.9"/>
<text x="0" y="0" transform="translate(10.3,333.9) rotate(-90)" text-anchor="middle" font-family="Liberation Sans" font-size="10.5" fill="#555">7</text>
<line x1="5.2" y1="343.8" x2="7.7" y2="343.8" stroke="#555" stroke-width="0.9"/>
<line x1="4.2" y1="353.6" x2="8.7" y2="353.6" stroke="#555" stroke-width="0.9"/>
<line x1="5.2" y1="363.5" x2="7.7" y2="363.5" stroke="#555" stroke-width="0.9"/>
<text x="0" y="0" transform="translate(10.3,373.3) rotate(-90)" text-anchor="middle" font-family="Liberation Sans" font-size="10.5" fill="#555">8</text>
<line x1="5.2" y1="383.1" x2="7.7" y2="383.1" stroke="#555" stroke-width="0.9"/>
<line x1="4.2" y1="393.0" x2="8.7" y2="393.0" stroke="#555" stroke-width="0.9"/>
<line x1="5.2" y1="402.8" x2="7.7" y2="402.8" stroke="#555" stroke-width="0.9"/>
<text x="0" y="0" transform="translate(10.3,412.7) rotate(-90)" text-anchor="middle" font-family="Liberation Sans" font-size="10.5" fill="#555">9</text>
<line x1="5.2" y1="422.5" x2="7.7" y2="422.5" stroke="#555" stroke-width="0.9"/>
<line x1="4.2" y1="432.3" x2="8.7" y2="432.3" stroke="#555" stroke-width="0.9"/>
<line x1="5.2" y1="442.2" x2="7.7" y2="442.2" stroke="#555" stroke-width="0.9"/>
<text x="0" y="0" transform="translate(10.3,452.0) rotate(-90)" text-anchor="middle" font-family="Liberation Sans" font-size="10.5" fill="#555">10</text>
<line x1="5.2" y1="461.8" x2="7.7" y2="461.8" stroke="#555" stroke-width="0.9"/>
<line x1="4.2" y1="471.7" x2="8.7" y2="471.7" stroke="#555" stroke-width="0.9"/>
<line x1="5.2" y1="481.5" x2="7.7" y2="481.5" stroke="#555" stroke-width="0.9"/>
<text x="0" y="0" transform="translate(10.3,491.4) rotate(-90)" text-anchor="middle" font-family="Liberation Sans" font-size="10.5" fill="#555">11</text>
<line x1="5.2" y1="501.2" x2="7.7" y2="501.2" stroke="#555" stroke-width="0.9"/>
<line x1="4.2" y1="511.0" x2="8.7" y2="511.0" stroke="#555" stroke-width="0.9"/>
<line x1="5.2" y1="520.9" x2="7.7" y2="520.9" stroke="#555" stroke-width="0.9"/>
<text x="0" y="0" transform="translate(10.3,530.7) rotate(-90)" text-anchor="middle" font-family="Liberation Sans" font-size="10.5" fill="#555">12</text>
</svg>
<div id="page" class="a"></div>
<div class="a" style="left:307.00px;top:222.00px;width:14.00px;height:14.00px;border:1px solid #8a8a8a;border-left-color:#c8c8c8;border-bottom-color:#cfcfcf;background:#fff"></div>
<svg class="a" style="left:307px;top:222px" width="14" height="14" viewBox="0 0 14 14"><path d="M6.5 3.5v7M2.5 7.2h8" stroke="#333" stroke-width=".7"/><path d="M6.5 2.6l-1 1.3h2zM6.5 11.3l-1.1-1.2h2.2zM2.2 7.2l1.2-1v2zM10.9 7.2l-1.2-1v2z" fill="#222"/></svg>
<div class="a" style="left:323.00px;top:239.00px;width:352.00px;height:80.00px;background:#e8eefa"></div>
<div class="d" style="right:532.50px;top:252.75px;font-size:33.67px;line-height:33.67px;color:#000;font-weight:bold">Application Form</div>
<div class="d" style="right:532.50px;top:302.97px;font-size:25.2px;line-height:25.2px;color:#000;letter-spacing:0">Postgraduate Certificate</div>
<div class="a" style="left:321.00px;top:346.50px;width:748.00px;height:34.50px;background:#cccccc;border-top:1.5px solid #000;border-bottom:1.5px solid #57534c"></div>
<div class="a" style="left:1068px;top:348px;width:0;height:31px;border-left:1px dotted #8aa0c8"></div>
<div class="a" style="left:322px;top:349px;width:0;height:31px;border-left:1px dotted #8aa0c8"></div>
<div class="d" style="left:514.00px;top:356.78px;font-size:16.8px;line-height:16.8px;color:#000;font-weight:bold;font-style:italic">SECTION A: All questions must be completed</div>
<div class="a" style="left:321.50px;top:388.00px;width:747.50px;height:27.00px;background:#d9d9d9"></div>
<div class="d" style="left:326.50px;top:394.30px;font-size:15px;line-height:15px;color:#000;font-weight:bold;letter-spacing:.05px">A(1) Personal details</div>
<div class="a" style="left:321.50px;top:418.00px;width:361.50px;height:26.70px;background:#f2f2f2"></div>
<div class="a" style="left:687.00px;top:418.00px;width:382.00px;height:26.70px;background:#f2f2f2"></div>
<div class="d" style="left:327.00px;top:426.02px;font-size:12.5px;line-height:12.5px;color:#000;font-weight:bold;font-style:italic;letter-spacing:.7px">Name (this should be your legal name)</div>
<div class="d" style="left:690.70px;top:425.92px;font-size:12.5px;line-height:12.5px;color:#000;font-weight:bold;font-style:italic;letter-spacing:.72px">Name (previous)</div>
<div class="d" style="left:822.30px;top:420.00px;font-size:11.1px;line-height:11.1px;color:#000;font-style:italic;color:#111">If you used a different name during previous</div>
<div class="d" style="left:822.30px;top:432.00px;font-size:11.1px;line-height:11.1px;color:#000;font-style:italic;color:#111">study, please include it here.</div>
<div class="d" style="left:321.70px;top:454.52px;font-size:12.5px;line-height:12.5px;color:#000;">Last (family)</div>
<div class="d" style="left:685.00px;top:454.52px;font-size:12.5px;line-height:12.5px;color:#000;">Last (family)</div>
<div class="a" style="left:463.00px;top:449.00px;width:212.00px;height:23.40px;background:#fdeec0;border:1px solid #b2c6d2"></div>
<div class="a" style="left:822.00px;top:449.00px;width:238.00px;height:23.40px;background:#fdeec0;border:1px solid #b2c6d2"></div>
<div class="d" style="left:465.50px;top:454.52px;font-size:12.5px;line-height:12.5px;color:#877e6c;">Please enter a last name</div>
<div class="d" style="left:824.60px;top:454.52px;font-size:12.5px;line-height:12.5px;color:#877e6c;">Last name</div>
<div class="d" style="left:321.70px;top:484.32px;font-size:12.5px;line-height:12.5px;color:#000;">First</div>
<div class="d" style="left:685.00px;top:484.32px;font-size:12.5px;line-height:12.5px;color:#000;">First</div>
<div class="a" style="left:463.00px;top:478.00px;width:212.00px;height:24.00px;background:#fdeec0;border:1px solid #b2c6d2"></div>
<div class="a" style="left:822.00px;top:478.00px;width:238.00px;height:24.00px;background:#fdeec0;border:1px solid #b2c6d2"></div>
<div class="d" style="left:465.50px;top:484.32px;font-size:12.5px;line-height:12.5px;color:#877e6c;">Please enter a First name</div>
<div class="d" style="left:824.60px;top:484.32px;font-size:12.5px;line-height:12.5px;color:#877e6c;">First name</div>
<div class="d" style="left:321.70px;top:513.82px;font-size:12.5px;line-height:12.5px;color:#000;">Middle names</div>
<div class="d" style="left:685.00px;top:513.82px;font-size:12.5px;line-height:12.5px;color:#000;">Middle names</div>
<div class="a" style="left:463.00px;top:508.00px;width:212.00px;height:24.00px;background:#fdeec0;border:1px solid #b2c6d2"></div>
<div class="a" style="left:822.00px;top:508.00px;width:238.00px;height:24.00px;background:#fdeec0;border:1px solid #b2c6d2"></div>
<div class="d" style="left:465.50px;top:513.82px;font-size:12.5px;line-height:12.5px;color:#877e6c;">Please enter a middle names</div>
<div class="d" style="left:824.60px;top:513.82px;font-size:12.5px;line-height:12.5px;color:#877e6c;">Middle names</div>
<div class="d" style="left:322.90px;top:543.52px;font-size:12.5px;line-height:12.5px;color:#000;">Title <span style="font-size:11.3px">(Mr/Mrs/Miss/Dr etc)</span></div>
<div class="d" style="left:686.20px;top:543.52px;font-size:12.5px;line-height:12.5px;color:#000;">Title <span style="font-size:11.3px">(Mr/Mrs/Miss/Dr etc)</span></div>
<div class="a" style="left:463.00px;top:538.00px;width:212.00px;height:23.00px;background:#fdeec0;border:1px solid #b2c6d2"></div>
<div class="a" style="left:822.00px;top:538.00px;width:238.00px;height:23.00px;background:#fdeec0;border:1px solid #b2c6d2"></div>
<div class="d" style="left:465.50px;top:539.82px;font-size:12.5px;line-height:12.5px;color:#877e6c;">Please choose a title</div>
<div class="d" style="left:824.60px;top:539.82px;font-size:12.5px;line-height:12.5px;color:#877e6c;">Please choose a title</div>
<div class="a" style="left:463px;top:449px;width:212px;height:23.4px;border:1px solid #8c8677;border-top-color:#a6b3c2;border-bottom-color:#a6b3c2"></div>
<svg class="a" style="left:556px;top:411px" width="24" height="40" viewBox="0 0 24 40"><circle cx="12" cy="12.4" r="10.5" fill="#fff" fill-opacity=".92"/><path d="M5.8 13.2A6.5 6.5 0 1 0 8 7.3" fill="none" stroke="#8a8a8a" stroke-width="1"/><path d="M4.3 12.8l2.6.2-.9 1.8z" fill="#8a8a8a"/><ellipse cx="12" cy="12.4" rx="1.6" ry="1.2" fill="none" stroke="#8a8a8a" stroke-width=".9"/><path d="M12.5 19v19" stroke="#777" stroke-width="1"/></svg>
<div class="a" style="left:459.50px;top:445.50px;width:7.00px;height:7.00px;background:#fff;border:1px solid #888;border-radius:1px"></div>
<div class="a" style="left:459.50px;top:468.50px;width:7.00px;height:7.00px;background:#fff;border:1px solid #888;border-radius:1px"></div>
<div class="a" style="left:565.00px;top:445.50px;width:7.00px;height:7.00px;background:#fff;border:1px solid #888;border-radius:1px"></div>
<div class="a" style="left:565.00px;top:468.50px;width:7.00px;height:7.00px;background:#fff;border:1px solid #888;border-radius:1px"></div>
<div class="a" style="left:671.00px;top:445.50px;width:7.00px;height:7.00px;background:#fff;border:1px solid #888;border-radius:1px"></div>
<div class="a" style="left:671.00px;top:468.50px;width:7.00px;height:7.00px;background:#fff;border:1px solid #888;border-radius:1px"></div>
<div class="a" style="left:323.30px;top:565.70px;width:176.90px;height:28.00px;background:#f2f2f2"></div>
<div class="a" style="left:503.00px;top:566.00px;width:566.00px;height:27.60px;background:#f2f2f2"></div>
<div class="d" style="left:328.00px;top:574.50px;font-size:13px;line-height:13px;color:#000;font-weight:bold;font-style:italic;letter-spacing:.35px">Date of Birth</div>
<div class="d" style="left:506.70px;top:574.00px;font-size:13px;line-height:13px;color:#000;font-weight:bold;font-style:italic;letter-spacing:.45px">Nationality and residence</div>
<div class="a" style="left:322.70px;top:600.20px;width:171.00px;height:23.50px;background:#fdeec0;border:1px solid #b2c6d2"></div>
<div class="d" style="left:233.09px;width:200px;text-align:center;top:605.96px;font-size:12.8px;line-height:12.8px;color:#877e6c;">D</div>
<div class="a" style="left:344.07px;top:600.70px;width:1.00px;height:22.50px;background:#b2c8d6"></div>
<div class="d" style="left:254.46px;width:200px;text-align:center;top:605.96px;font-size:12.8px;line-height:12.8px;color:#877e6c;">D</div>
<div class="a" style="left:365.45px;top:600.70px;width:1.00px;height:22.50px;background:#b2c8d6"></div>
<div class="d" style="left:275.84px;width:200px;text-align:center;top:605.96px;font-size:12.8px;line-height:12.8px;color:#877e6c;">M</div>
<div class="a" style="left:386.82px;top:600.70px;width:1.00px;height:22.50px;background:#b2c8d6"></div>
<div class="d" style="left:297.21px;width:200px;text-align:center;top:605.96px;font-size:12.8px;line-height:12.8px;color:#877e6c;">M</div>
<div class="a" style="left:408.20px;top:600.70px;width:1.00px;height:22.50px;background:#b2c8d6"></div>
<div class="d" style="left:318.59px;width:200px;text-align:center;top:605.96px;font-size:12.8px;line-height:12.8px;color:#877e6c;">Y</div>
<div class="a" style="left:429.57px;top:600.70px;width:1.00px;height:22.50px;background:#b2c8d6"></div>
<div class="d" style="left:339.96px;width:200px;text-align:center;top:605.96px;font-size:12.8px;line-height:12.8px;color:#877e6c;">Y</div>
<div class="a" style="left:450.95px;top:600.70px;width:1.00px;height:22.50px;background:#b2c8d6"></div>
<div class="d" style="left:361.34px;width:200px;text-align:center;top:605.96px;font-size:12.8px;line-height:12.8px;color:#877e6c;">Y</div>
<div class="a" style="left:472.32px;top:600.70px;width:1.00px;height:22.50px;background:#b2c8d6"></div>
<div class="d" style="left:382.71px;width:200px;text-align:center;top:605.96px;font-size:12.8px;line-height:12.8px;color:#877e6c;">Y</div>
<div class="d" style="left:339.20px;top:634.32px;font-size:12.5px;line-height:12.5px;color:#000;">DD</div>
<div class="d" style="left:374.90px;top:634.32px;font-size:12.5px;line-height:12.5px;color:#000;">MM</div>
<div class="d" style="left:420.40px;top:634.32px;font-size:12.5px;line-height:12.5px;color:#000;">YYYY</div>
<div class="a" style="left:322.70px;top:653.30px;width:178.10px;height:23.70px;background:#f2f2f2"></div>
<div class="a" style="left:495.00px;top:653.30px;width:5.80px;height:23.70px;background:#f2f2f2"></div>
<div class="d" style="left:327.30px;top:658.80px;font-size:13px;line-height:13px;color:#000;font-weight:bold;font-style:italic;letter-spacing:.35px">Sex</div>
<div class="a" style="left:322.70px;top:682.00px;width:13.20px;height:18.20px;background:#fff0c2"></div>
<svg class="a" style="left:321.6px;top:684.2px" width="14" height="14" viewBox="0 0 14 14"><circle cx="7" cy="7" r="5.2" fill="none" stroke="#333" stroke-width="1"/></svg>
<div class="d" style="left:338.20px;top:686.92px;font-size:12.5px;line-height:12.5px;color:#000;">Male</div>
<div class="a" style="left:378.60px;top:682.00px;width:13.40px;height:18.20px;background:#fff0c2"></div>
<svg class="a" style="left:377.9px;top:684.2px" width="14" height="14" viewBox="0 0 14 14"><circle cx="7" cy="7" r="5.2" fill="none" stroke="#333" stroke-width="1"/></svg>
<div class="d" style="left:394.90px;top:686.92px;font-size:12.5px;line-height:12.5px;color:#000;">Female</div>
<div class="d" style="left:501.50px;top:599.52px;font-size:12.5px;line-height:12.5px;color:#000;">Country of permanent</div>
<div class="d" style="left:501.50px;top:613.12px;font-size:12.5px;line-height:12.5px;color:#000;">residence</div>
<div class="d" style="left:501.50px;top:634.22px;font-size:12.5px;line-height:12.5px;color:#000;">Country of birth</div>
<div class="d" style="left:501.50px;top:660.02px;font-size:12.5px;line-height:12.5px;color:#000;">Nationality</div>
<div class="d" style="left:501.50px;top:686.32px;font-size:12.5px;line-height:12.5px;color:#000;">Any second nationality</div>
<div class="a" style="left:651.30px;top:600.30px;width:206.70px;height:23.00px;background:#fdeec0;border:1px solid #b2c6d2"></div>
<div class="d" style="left:653.20px;top:606.72px;font-size:12.5px;line-height:12.5px;color:#877e6c;">Country of permanent residence</div>
<div class="a" style="left:651.30px;top:628.40px;width:206.70px;height:23.00px;background:#fdeec0;border:1px solid #b2c6d2"></div>
<div class="d" style="left:653.20px;top:634.82px;font-size:12.5px;line-height:12.5px;color:#877e6c;">Country of birth</div>
<div class="a" style="left:651.30px;top:653.70px;width:206.70px;height:22.80px;background:#fdeec0;border:1px solid #b2c6d2"></div>
<div class="d" style="left:653.20px;top:660.02px;font-size:12.5px;line-height:12.5px;color:#877e6c;">Nationality</div>
<div class="a" style="left:651.30px;top:680.70px;width:206.70px;height:22.70px;background:#fdeec0;border:1px solid #b2c6d2"></div>
<div class="d" style="left:653.20px;top:686.97px;font-size:12.5px;line-height:12.5px;color:#877e6c;">Any second nationality</div>
<div class="d" style="left:865.75px;top:599.12px;font-size:12.5px;line-height:12.5px;color:#000;">Do you require a visa to study in the</div>
<div class="d" style="left:865.75px;top:612.92px;font-size:12.5px;line-height:12.5px;color:#000;">UK?</div>
<div class="a" style="left:871.30px;top:627.20px;width:12.60px;height:18.00px;background:#fff0c2"></div>
<svg class="a" style="left:870.4px;top:629.2px" width="14" height="14" viewBox="0 0 14 14"><circle cx="7" cy="7" r="5.2" fill="none" stroke="#333" stroke-width="1"/></svg>
<div class="d" style="left:888.00px;top:631.72px;font-size:12.5px;line-height:12.5px;color:#000;">Yes</div>
<div class="a" style="left:922.40px;top:627.20px;width:13.40px;height:18.00px;background:#fff0c2"></div>
<svg class="a" style="left:921.8px;top:629.2px" width="14" height="14" viewBox="0 0 14 14"><circle cx="7" cy="7" r="5.2" fill="none" stroke="#333" stroke-width="1"/></svg>
<div class="d" style="left:939.00px;top:631.72px;font-size:12.5px;line-height:12.5px;color:#000;">No</div>
<div class="d" style="left:865.75px;top:659.52px;font-size:12.5px;line-height:12.5px;color:#000;">Current UK visa status,if applicable:</div>
<div class="a" style="left:867.20px;top:680.10px;width:192.60px;height:23.30px;background:#fdeec0;border:1px solid #b2c6d2"></div>
<div class="d" style="left:869.50px;top:686.32px;font-size:12.5px;line-height:12.5px;color:#877e6c;">Current UK visa status</div>
<div id="rp" class="a"></div>
<div class="rl" style="top:139px;font-weight:bold;color:#333;letter-spacing:.25px">Text field</div>
<div class="rl" style="top:163px">Who needs to fill this out?</div>
<div class="inp" style="top:178px;height:23px"></div>
<div class="a" style="left:1355px;top:183px;width:13px;height:13px;background:#ffefbf;border:1px solid #e6d49a"></div>
<div class="rl" style="left:1376px;top:183px">Anyone</div>
<svg class="chev" style="top:187px" width="8" height="5" viewBox="0 0 8 5"><path d="M1 1l3 3 3-3" fill="none" stroke="#444" stroke-width="1.1"/></svg>
<div class="hsep" style="top:209px"></div>
<div class="rl" style="top:220px">Key</div>
<div class="inp" style="top:235px;height:22px"></div>
<div class="rl" style="left:1354px;top:240px">Text1</div>
<svg class="chev" style="top:243px" width="8" height="5" viewBox="0 0 8 5"><path d="M1 1l3 3 3-3" fill="none" stroke="#444" stroke-width="1.1"/></svg>
<div class="rl" style="top:267px">Placeholder</div>
<div class="inp" style="top:282px;height:23px"></div>
<div class="rl" style="left:1353px;top:287px">Please enter a last name</div>
<div class="rl" style="top:316px">Tag</div>
<div class="inp" style="top:330px;height:23px"></div>
<div class="rl" style="top:363px">Tip</div>
<div class="inp" style="top:377px;height:37px"></div>
<div class="rl" style="left:1353px;top:381px">Please enter a last name</div>
<div class="rl" style="top:425px">Default value</div>
<div class="inp" style="top:440px;height:23px"></div>
<div class="hsep" style="top:471px"></div>
<div class="rl" style="top:482px">Format</div>
<div class="inp" style="top:497px;height:23px"></div>
<div class="rl" style="left:1353px;top:502px">None</div>
<svg class="chev" style="top:506px" width="8" height="5" viewBox="0 0 8 5"><path d="M1 1l3 3 3-3" fill="none" stroke="#444" stroke-width="1.1"/></svg>
<div class="rl" style="top:530px">Allowed symbols</div>
<div class="inp" style="top:545px;height:23px"></div>
<div class="cb" style="top:577px"></div>
<svg class="a" style="left:1351px;top:579px" width="11" height="10" viewBox="0 0 11 10"><path d="M1 5l3 3 6-7" fill="none" stroke="#222" stroke-width="1.4"/></svg>
<div class="rl" style="left:1372px;top:578px">Fixed size field</div>
<div class="cb" style="top:601px"></div>
<div class="rl" style="left:1372px;top:602px">AutoFit</div>
<div class="cb" style="top:626px"></div>
<div class="rl" style="left:1372px;top:627px">Multiline field</div>
<div class="hsep" style="top:651px"></div>
<div class="cb" style="top:664px"></div>
<div class="rl" style="left:1372px;top:665px">Characters limit</div>
<div class="a" style="left:1505px;top:661px;width:47px;height:22px;border:1px solid #e0e0e0;background:#f1f1f1;border-radius:2px"></div>
<div class="rl" style="left:1519px;top:665px;color:#b0b0b0">10</div>
<svg class="a" style="left:1537px;top:663px" width="9" height="17" viewBox="0 0 9 17" fill="none" stroke="#b8b8b8" stroke-width="1"><path d="M1.5 5l3-3 3 3M1.5 12l3 3 3-3"/></svg>
<div class="cb" style="top:691px"></div>
<div class="rl" style="left:1372px;top:692px">Comb of characters</div>

<div id="ri" class="a"></div>
<svg class="a" style="left:1579px;top:154px" width="10" height="14" viewBox="0 0 10 14"><path d="M4.5 1h5M5 1v12M8 1v12" stroke="#888" stroke-width="1" fill="none"/><path d="M5 1.2a3 3 0 0 0 0 6z" fill="#888"/></svg>
<svg class="a" style="left:1575px;top:194px" width="17" height="13" viewBox="0 0 17 13" fill="none" stroke="#888" stroke-width="1"><path d="M1.5 1.5h14v10h-14zM1.5 4.5h14M1.5 8h14M6 1.5v10M10.5 1.5v10"/></svg>
<svg class="a" style="left:1576px;top:232px" width="16" height="16" viewBox="0 0 16 16" fill="none" stroke="#888" stroke-width="1"><path d="M1.5 1.5h13v13h-13z"/><circle cx="4.5" cy="4.5" r="1.2"/><path d="M1.5 12l4-4 3 3 2.5-2.5 3.5 3.5"/></svg>
<svg class="a" style="left:1578px;top:271px" width="13" height="17" viewBox="0 0 13 17" fill="none" stroke="#888" stroke-width="1"><path d="M0.5 0.5h12v16h-12zM0.5 3h12M0.5 14h12"/></svg>
<svg class="a" style="left:1576px;top:311px" width="16" height="16" viewBox="0 0 16 16" fill="none" stroke="#888" stroke-width="1"><path d="M3.5 8.5h-2v-7h7v2"/><circle cx="9.5" cy="9.5" r="5.3"/></svg>
<svg class="a" style="left:1576px;top:351px" width="16" height="16" viewBox="0 0 16 16" fill="none" stroke="#888" stroke-width="1"><path d="M1.5 10.5h3v5h-3zM6.5 6.5h3v9h-3zM11.5 1.5h3v14h-3z"/></svg>
<svg class="a" style="left:1576px;top:389px" width="16" height="20" viewBox="0 0 16 20" fill="none" stroke="#888" stroke-width="1"><path d="M1 1.5h7M4.5 1.5v10"/><text x="7" y="11" font-family="Liberation Sans" font-size="10" fill="#888" stroke="none">a</text><path d="M2 18a8 4 0 0 1 12 0"/></svg>
<svg class="a" style="left:1577px;top:429px" width="15" height="19" viewBox="0 0 15 19" fill="none" stroke="#888" stroke-width="1"><path d="M1.5 15.5v-14h7l3 3v4"/><path d="M3.5 5.5h4M3.5 8h6M3.5 10.5h3"/><path d="M5.5 10.5h9v7h-9zM5.5 10.5l4.5 4 4.5-4"/></svg>
<div class="a" style="left:1564px;top:463px;width:36px;height:31px;background:#7e858b"></div>
<svg class="a" style="left:1575px;top:472px" width="18" height="12" viewBox="0 0 18 12" fill="none" stroke="#fff" stroke-width="1"><path d="M0.5 0.5h16v10h-16z"/><path d="M1.5 1.5h14v8h-14z" stroke-opacity=".6"/><path d="M3 3v5" stroke-width="1.4"/></svg>

<div id="sb" class="a"></div>
<div class="st" style="left:42px">Page 1 of 6</div>
<div class="a" style="left:110px;top:710px;width:1px;height:25px;background:#d0d0d0"></div>
<svg class="a" style="left:120px;top:714px" width="15" height="16" viewBox="0 0 15 16"><path d="M1 1.5h12M1 3.5h12M1 5.5h8" stroke="#666" stroke-width="1"/><text x="1" y="14.5" font-family="Liberation Sans" font-size="8" fill="#666">123</text></svg>
<div class="st" style="left:142px;letter-spacing:.25px">Word count</div>
<div class="a" style="left:1083px;top:710px;width:1px;height:25px;background:#d0d0d0"></div>
<div class="st" style="left:1097px;letter-spacing:.13px">English (United States)</div>
<svg class="a" style="left:1228px;top:720px" width="8" height="5" viewBox="0 0 8 5"><path d="M1 1l3 3 3-3" fill="none" stroke="#444" stroke-width="1.1"/></svg>
<svg class="a" style="left:1243px;top:714px" width="17" height="17" viewBox="0 0 17 17" fill="none" stroke="#333" stroke-width="1"><circle cx="8.5" cy="8.5" r="7.5"/><ellipse cx="8.5" cy="8.5" rx="3.8" ry="7.5"/><path d="M8.5 1v15M3 3.5h11M3 13.5h11"/></svg>
<div class="a" style="left:1273px;top:712px;width:21px;height:21px;background:#7e858b"></div>
<svg class="a" style="left:1275px;top:714px" width="17" height="17" viewBox="0 0 17 17"><text x="1" y="8" font-family="Liberation Sans" font-size="7.5" fill="#fff" font-weight="bold">ABC</text><path d="M5 11l3 3 7-7" fill="none" stroke="#fff" stroke-width="1.3"/></svg>
<div class="a" style="left:1303px;top:710px;width:1px;height:25px;background:#d0d0d0"></div>
<svg class="a" style="left:1314px;top:714px" width="19" height="17" viewBox="0 0 19 17" fill="none" stroke="#444" stroke-width="1"><path d="M1 3l1.5 1.5 3-3M8 1.5l3 3M11 1.5l-3 3"/><path d="M1 8.5h6M1 11.5h5M1 14.5h4"/><path d="M8 15.5l1-3 6-6 2 2-6 6z"/></svg>
<svg class="a" style="left:1336px;top:720px" width="8" height="5" viewBox="0 0 8 5"><path d="M1 1l3 3 3-3" fill="none" stroke="#444" stroke-width="1.1"/></svg>
<div class="a" style="left:1355px;top:710px;width:1px;height:25px;background:#d0d0d0"></div>
<svg class="a" style="left:1369px;top:714px" width="14" height="17" viewBox="0 0 14 17" fill="none" stroke="#444" stroke-width="1"><path d="M0.5 0.5h12v15h-12z"/><path d="M6.5 1v4M5 2.5l1.5-1.5 1.5 1.5M6.5 15v-4M5 13.5l1.5 1.5 1.5-1.5M1 8h2.5M12 8h-2.5"/></svg>
<svg class="a" style="left:1399px;top:715px" width="19" height="14" viewBox="0 0 19 14" fill="none" stroke="#444" stroke-width="1"><path d="M0.5 1v12M18.5 1v12M3 7h13M5.5 4.5l-2.5 2.5 2.5 2.5M13.5 4.5l2.5 2.5-2.5 2.5"/></svg>
<svg class="a" style="left:1435px;top:718px" width="12" height="8" viewBox="0 0 12 8"><path d="M0 4.5h11" stroke="#888" stroke-width="1"/></svg>
<div class="st" style="left:1464px;font-weight:bold;color:#333;font-size:11.6px;-webkit-text-stroke:0">Zoom 100%</div>
<svg class="a" style="left:1545px;top:716px" width="13" height="13" viewBox="0 0 13 13"><path d="M0 6.5h13M6.5 0v13" stroke="#666" stroke-width="1"/></svg>

</body></html>
